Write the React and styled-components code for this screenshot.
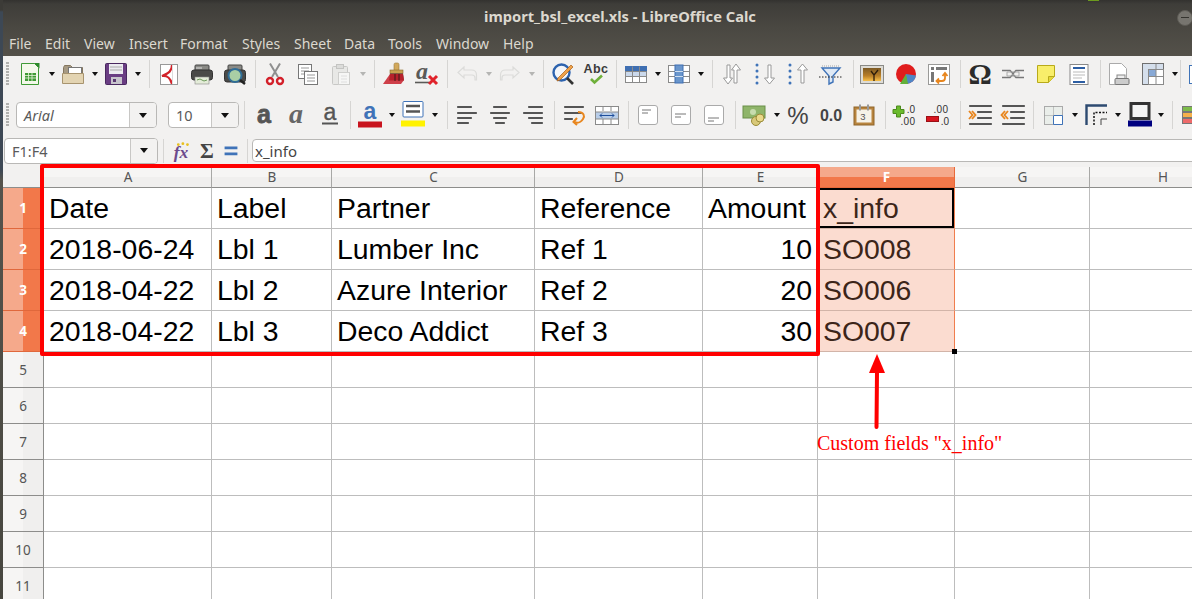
import React from 'react';
import styled, { createGlobalStyle } from 'styled-components';

const UI_FONT = '"Noto Sans", "Open Sans", sans-serif';

const GlobalStyle = createGlobalStyle`
html, body { margin: 0; padding: 0; background: #f2f1f0; }
* { box-sizing: border-box; }
`

const bar = (x, y, w, h = 2, fill = '#555') => <rect x={x} y={y} width={w} height={h} rx="0.8" fill={fill} />;
const tableLines = (stroke = '#8a8a8a') => (
    <path d="M1.5 9.5h21M1.5 14.5h21M8.5 4.5v16M15.5 4.5v16" stroke={stroke} fill="none" />
);

const icons = {
    new: <>
        <path d="M3.5 1.5h13l4 4v17h-17z" fill="#f3f8ea" stroke="#3f9a35" />
        <path d="M16 1h5.5v5.5z" fill="#2c8a2a" />
        <rect x="7" y="11" width="11" height="8" fill="#3f9a35" />
        <path d="M7 13.5h11M7 16h11M10.5 11v8M14 11v8" stroke="#e6f3d8" strokeWidth="0.8" />
    </>,
    open: <>
        <path d="M2.5 5.5l1-2h6l2 2h10v7h-19z" fill="#a79a83" stroke="#85775f" />
        <rect x="7.5" y="5.5" width="13" height="7" fill="#fff" stroke="#777" />
        <path d="M1.5 11.5h21v10h-21z" fill="#e3d4b2" stroke="#a8946f" />
    </>,
    save: <>
        <rect x="1.5" y="1.5" width="21" height="21" rx="1" fill="#6a3d83" stroke="#49285f" />
        <rect x="5" y="2" width="14" height="10" fill="#ecebf0" />
        <path d="M6 5h12M6 8h12" stroke="#aaa" />
        <rect x="7" y="15" width="11" height="7" fill="#c7c4cc" />
        <rect x="9" y="17" width="3" height="3" fill="#5a3a72" />
    </>,
    pdf: <>
        <rect x="3.5" y="2.5" width="17" height="20" fill="#fff" stroke="#999" />
        <path d="M15 3c0 6-3 8-10 11 5-.5 8 1 10 8" stroke="#d2232a" strokeWidth="2.2" fill="none" />
        <path d="M15.5 3v19" stroke="#ddd" />
    </>,
    print: <>
        <rect x="5" y="3" width="14" height="7" rx="1" fill="#8a8a86" stroke="#444" />
        <rect x="1.5" y="8" width="21" height="10" rx="2.5" fill="#4a4a48" stroke="#333" />
        <rect x="5" y="15" width="14" height="7" fill="#e4ecd9" stroke="#888" strokeWidth="0.6" />
        <path d="M7 18l3-1 4 2 3-1" stroke="#6d9a5a" fill="none" />
        <path d="M6 6h6" stroke="#ddd" />
    </>,
    preview: <>
        <rect x="5" y="3" width="14" height="7" rx="1" fill="#8a8a86" stroke="#444" />
        <rect x="1.5" y="8" width="21" height="12" rx="2.5" fill="#4a4a48" stroke="#333" />
        <circle cx="12" cy="13.5" r="6.5" fill="#a9cfa5" stroke="#2f6c96" strokeWidth="2" />
        <path d="M17 18l5 4" stroke="#222" strokeWidth="2.5" />
    </>,
    cut: <>
        <path d="M9 15L17 1.5M15 15L7 1.5" stroke="#8f8f8f" strokeWidth="2" fill="none" />
        <circle cx="7" cy="19" r="3" fill="#fff" stroke="#d3202a" strokeWidth="2.4" />
        <circle cx="17" cy="19" r="3" fill="#fff" stroke="#d3202a" strokeWidth="2.4" />
    </>,
    copy: <>
        <rect x="2.5" y="2.5" width="13" height="14" fill="#fff" stroke="#777" />
        <path d="M5 6h8M5 9h8M5 12h8" stroke="#999" />
        <rect x="8.5" y="9.5" width="13" height="13" fill="#fff" stroke="#777" />
        <path d="M11 13h8M11 16h8M11 19h8" stroke="#999" />
    </>,
    paste: <>
        <rect x="3.5" y="4.5" width="15" height="18" rx="1" fill="#e8e8e6" stroke="#c8c8c6" />
        <rect x="7.5" y="2.5" width="7" height="4" fill="#dcdcda" stroke="#c4c4c2" />
        <rect x="9.5" y="10.5" width="11" height="12" fill="#f6f6f5" stroke="#cfcfcd" />
        <path d="M12 14h6M12 17h6M12 20h6" stroke="#dedede" />
    </>,
    brush: <>
        <rect x="12" y="1" width="5" height="8" rx="1.5" fill="#d2a95c" stroke="#9c7a3a" strokeWidth="0.6" />
        <rect x="8" y="8" width="13" height="3.5" fill="#c9a14f" stroke="#8a6a2c" strokeWidth="0.6" />
        <path d="M8 11.5h13l1 7H7z" fill="#5b2a2a" />
        <path d="M8 12L1 22h18l3-4-1-6z" fill="#c8202c" opacity="0.85" />
        <path d="M13 12v7M17 12v7" stroke="#3a1a1a" />
    </>,
    clear: <>
        <text x="1" y="17" fontFamily="Liberation Serif" fontStyle="italic" fontWeight="700" fontSize="24" fill="#5a5a58">a</text>
        <path d="M0 20.5h14" stroke="#5a5a58" strokeWidth="1.6" />
        <path d="M14 14l8 8M22 14l-8 8" stroke="#e0222a" strokeWidth="3" />
    </>,
    undo: <path d="M9 5L3 10.5 9 16v-3h8c2 0 3 1 3 3v2h1.5v-5c0-3-2-5-5-5H9z" fill="#f2f1f0" stroke="#dcdcda" strokeWidth="1.2" />,
    redo: <path d="M15 5l6 5.5L15 16v-3H7c-2 0-3 1-3 3v2H2.500v-5c0-3 2-5 5-5H15z" fill="#f2f1f0" stroke="#dcdcda" strokeWidth="1.2" />,
    find: <>
        <circle cx="10.500" cy="10.500" r="8" fill="#f4f6fa" stroke="#2d63ae" strokeWidth="2.4" />
        <path d="M16 16l6 6" stroke="#333" strokeWidth="2.6" />
        <path d="M7 16L20 3l2 2L9 18l-3 1z" fill="#f0a24a" stroke="#a85f17" strokeWidth="0.7" />
    </>,
    spell: <>
        <text x="12" y="11" textAnchor="middle" fontFamily="Liberation Sans" fontWeight="700" fontSize="12.5" letterSpacing="0.4" fill="#3c3c3c">Abc</text>
        <path d="M7 17l3.500 3.500L18 13.500" stroke="#6fb03a" strokeWidth="2.6" fill="none" />
    </>,
    rows: <>
        <rect x="1.500" y="4.500" width="21" height="16" fill="#fff" stroke="#8a8a8a" />
        <rect x="1" y="4" width="22" height="5.500" fill="#3f6fb2" />
        <rect x="2" y="10" width="20" height="4" fill="#cbd9ec" />
        {tableLines()}
    </>,
    cols: <>
        <rect x="1.500" y="3.500" width="21" height="17" fill="#fff" stroke="#8a8a8a" />
        <path d="M1.500 9.500h21M1.500 14.500h21M8.500 3.500v17M15.500 3.500v17" stroke="#8a8a8a" />
        <rect x="8" y="3" width="8" height="18" fill="#6a96cc" stroke="#3f6fb2" />
        <path d="M8 9.500h8M8 14.500h8" stroke="#cfdff2" />
    </>,
    sort: <>
        <path d="M7 3v13H3.500L8 22l4.500-6H10V3z" fill="#fff" stroke="#999" />
        <path d="M17 21V8h3.500L16 2l-4.500 6H14v13z" fill="#fff" stroke="#999" />
    </>,
    asc: <>
        <path d="M4 3v0M4 9v0M4 15v0M4 21v0" stroke="#3f73b8" strokeWidth="3" strokeLinecap="round" />
        <path d="M15 3v13h-3.500L16.500 22l5-6H18V3z" fill="#fff" stroke="#999" />
    </>,
    desc: <>
        <path d="M4 3v0M4 9v0M4 15v0M4 21v0" stroke="#3f73b8" strokeWidth="3" strokeLinecap="round" />
        <path d="M15 21V8h-3.500L16.500 2l5 6H18v13z" fill="#fff" stroke="#999" />
    </>,
    filter: <>
        <path d="M3 6h18l-7 8v6l-4 2v-8z" fill="#dfe9f5" stroke="#3f73b8" strokeWidth="1.4" />
        <path d="M3 4h18" stroke="#ccc" strokeWidth="2" strokeDasharray="1 1" />
        <path d="M0 15h24" stroke="#222" strokeDasharray="1.500 1.500" />
    </>,
    image: <>
        <defs>
            <linearGradient id="dusk" x1="0" y1="0" x2="0" y2="1">
                <stop offset="0" stopColor="#7d5a24" />
                <stop offset="0.6" stopColor="#b97f28" />
                <stop offset="1" stopColor="#f8c04a" />
            </linearGradient>
        </defs>
        <rect x="-0.500" y="3.500" width="23" height="18" fill="#dedcd6" stroke="#8a8a86" />
        <rect x="2" y="6" width="18" height="13" fill="url(#dusk)" />
        <path d="M13 19v-7M13 13l-3-4M13 13l4-5" stroke="#2e1d0b" strokeWidth="1.300" fill="none" />
    </>,
    chart: <>
        <circle cx="12" cy="12" r="10" fill="#e01d1d" />
        <path d="M12 12l10 1.500a10 10 0 0 1-9 8.500H8z" fill="#4f86c6" />
        <path d="M12 12l2 10H6z" fill="#63b03a" />
    </>,
    pivot: <>
        <rect x="1.500" y="2.500" width="21" height="20" fill="#fff" stroke="#9a9a98" />
        <rect x="4" y="5" width="3" height="3" fill="#777" />
        <rect x="9" y="5" width="11" height="3" fill="#777" />
        <rect x="4" y="10" width="3" height="10" fill="#777" />
        <path d="M10 19h5c2 0 3-1 3-3v-4M15.500 14l2.500-3 2.500 3M12 16.500L9.500 19l2.500 2.500" stroke="#e8861e" strokeWidth="1.800" fill="none" />
    </>,
    omega: <text x="12" y="22" textAnchor="middle" fontFamily="Liberation Serif" fontWeight="700" fontSize="29" fill="#2b2b2b">Ω</text>,
    link: <>
        <path d="M1 8.500h8l3 3 3-3h8M1 15.500h8l3-3 3 3h8" stroke="#777" strokeWidth="1.600" fill="none" />
        <path d="M6 10h12v4H6z" fill="none" stroke="#aaa" />
    </>,
    note: <>
        <path d="M3.500 3.500h17v11l-6 6h-11z" fill="#f8ee6a" stroke="#b8aa1a" />
        <path d="M14.500 20.500v-6h6" fill="#e4d73a" stroke="#b8aa1a" />
    </>,
    header: <>
        <rect x="3" y="2.500" width="18" height="20" fill="#fff" stroke="#888" />
        <path d="M6 6h12" stroke="#2d5ea3" strokeWidth="2" />
        <path d="M6 10h12M6 13h12M6 16h9" stroke="#bbb" />
        <path d="M6 20h12" stroke="#2d5ea3" strokeWidth="2" />
    </>,
    page: <>
        <path d="M1.500 1.500h12l5 5v16h-17z" fill="#fff" stroke="#aaa" />
        <rect x="9" y="13" width="8" height="4" fill="#eee" stroke="#888" />
        <rect x="7" y="16.500" width="14" height="6" rx="1" fill="#ccc" stroke="#777" />
    </>,
    freeze: <>
        <rect x="1.500" y="1.500" width="21" height="21" fill="#d5dfec" stroke="#707070" />
        <rect x="7.500" y="7.500" width="15" height="15" fill="#fff" stroke="#8a8a8a" />
        <rect x="8" y="8" width="7" height="6" fill="#88a9d6" />
        <path d="M15 2v20M8 14.500h15" stroke="#8a8a8a" />
    </>,
    next: <>
        <rect x="1.500" y="3.500" width="21" height="18" fill="#fff" stroke="#3f73b8" />
        <path d="M8 4v17" stroke="#e8861e" />
    </>,
    bold: <text x="12" y="20" textAnchor="middle" fontFamily="Liberation Sans" fontWeight="700" fontSize="25" fill="#555" stroke="#555" strokeWidth="0.8">a</text>,
    italic: <text x="11" y="20" textAnchor="middle" fontFamily="Liberation Serif" fontStyle="italic" fontWeight="700" fontSize="28" fill="#666">a</text>,
    under: <>
        <text x="12" y="17" textAnchor="middle" fontFamily="Liberation Sans" fontSize="23" fill="#555" stroke="#555" strokeWidth="0.4">a</text>
        <path d="M4 20.500h16" stroke="#555" strokeWidth="2" />
    </>,
    fontcolor: <>
        <text x="12" y="16" textAnchor="middle" fontFamily="Liberation Sans" fontWeight="700" fontSize="23" fill="#3f73b8">a</text>
        <rect x="0" y="18.500" width="24" height="6" fill="#c8141e" />
    </>,
    hilite: <>
        <rect x="2" y="-1.500" width="20" height="15.500" rx="1" fill="#fff" stroke="#3f73b8" />
        <path d="M5 3h14M5 8.500h14" stroke="#555" strokeWidth="2.400" />
        <rect x="0" y="17.500" width="24" height="6" fill="#fff200" />
    </>,
    left: <>{bar(2, 3, 15)}{bar(2, 9, 20)}{bar(2, 14, 15)}{bar(2, 19, 12)}</>,
    center: <>{bar(5, 3, 14)}{bar(2, 9, 20)}{bar(5, 14, 14)}{bar(7, 19, 10)}</>,
    right: <>{bar(7, 3, 15)}{bar(2, 9, 20)}{bar(7, 14, 15)}{bar(10, 19, 12)}</>,
    wrap: <>
        {bar(2, 3, 20)}{bar(2, 9, 18)}{bar(2, 15, 9)}
        <path d="M16 9c6 0 7 4 5 7s-4 5-9 3" stroke="#e8861e" strokeWidth="2" fill="none" />
        <path d="M15 15l-3.500 4 3.500 3" stroke="#e8861e" strokeWidth="2" fill="none" />
    </>,
    merge: <>
        <rect x="0.500" y="3.500" width="23" height="18" fill="#fff" stroke="#8a8a8a" />
        <rect x="1" y="9" width="22" height="7" fill="#b8cde8" />
        <path d="M1 9h22M1 16h22M8 3v5M16 3v5M8 16v5M16 16v5" stroke="#8a8a8a" />
        <path d="M5 12.500h14M7 10.500l-2 2 2 2M17 10.500l2 2-2 2" stroke="#1e4e9c" fill="none" />
    </>,
    top: <>
        <rect x="2.500" y="2.500" width="19" height="19" rx="2.500" fill="#fff" stroke="#aaa" />
        <path d="M6 7h9M6 10h6" stroke="#777" />
    </>,
    mid: <>
        <rect x="2.500" y="2.500" width="19" height="19" rx="2.500" fill="#fff" stroke="#aaa" />
        <path d="M6 11h11M6 14h6" stroke="#777" />
    </>,
    bottom: <>
        <rect x="2.500" y="2.500" width="19" height="19" rx="2.500" fill="#fff" stroke="#aaa" />
        <path d="M6 15h11M6 18h6" stroke="#777" />
    </>,
    money: <>
        <rect x="0" y="3" width="22" height="12" fill="#8fb56a" stroke="#6a8f48" />
        <circle cx="10" cy="9" r="3" fill="#c7dcae" />
        <circle cx="13" cy="18" r="4.500" fill="#d8c878" stroke="#9a8c3a" />
        <circle cx="17" cy="15" r="4" fill="#ead98a" stroke="#9a8c3a" />
    </>,
    percent: <text x="12" y="21" textAnchor="middle" fontFamily="Liberation Sans" fontSize="24" fill="#444">%</text>,
    decimal: <text x="12" y="18" textAnchor="middle" fontFamily="Liberation Sans" fontWeight="700" fontSize="16" fill="#444">0.0</text>,
    date: <>
        <rect x="2" y="4" width="20" height="18" fill="#b8843e" stroke="#8f6528" />
        <rect x="4.500" y="6.500" width="15" height="13" fill="#f6f2e8" />
        <path d="M8 1.500v6M16 1.500v6" stroke="#999" strokeWidth="2" />
        <text x="11" y="17" textAnchor="middle" fontFamily="Liberation Sans" fontSize="9.500" fill="#555">3</text>
    </>,
    adddec: <>
        <path d="M3.500 3h4v3.500H11v4H7.500V14h-4v-3.500H0v-4h3.500z" fill="#6bbb2d" stroke="#4c8a1c" />
        <text x="18" y="10" textAnchor="middle" fontFamily="Liberation Sans" fontSize="10" fill="#333">.0</text>
        <text x="15" y="22" textAnchor="middle" fontFamily="Liberation Sans" fontSize="10" letterSpacing="0.4" fill="#333">.00</text>
    </>,
    remdec: <>
        <text x="15" y="10" textAnchor="middle" fontFamily="Liberation Sans" fontSize="10" letterSpacing="0.4" fill="#333">.00</text>
        <rect x="0.500" y="13.500" width="12" height="5" fill="#d8141e" stroke="#9a1016" />
        <text x="19" y="22" textAnchor="middle" fontFamily="Liberation Sans" fontSize="10" fill="#333">.0</text>
    </>,
    indent: <>
        {bar(1, 2, 23)}{bar(9, 8, 15)}{bar(9, 14, 15)}{bar(1, 20, 23)}
        <path d="M1 8l3.500 4L1 16M4 8l3.500 4L4 16" stroke="#e8861e" strokeWidth="1.800" fill="none" />
    </>,
    outdent: <>
        {bar(1, 2, 23)}{bar(9, 8, 15)}{bar(9, 14, 15)}{bar(1, 20, 23)}
        <path d="M7 8l-3.500 4L7 16M4 8L.500 12 4 16" stroke="#e8861e" strokeWidth="1.800" fill="none" />
    </>,
    borders: <>
        <rect x="2.500" y="3.500" width="18" height="18" fill="#eaeeea" stroke="#aaa" />
        <rect x="11.500" y="12.500" width="9" height="9" fill="#fff" />
        <path d="M11.500 21.500v-9h9M20.500 12.500v9h-9" stroke="#3f73b8" fill="none" />
        <path d="M2.500 12.500h9M11.500 3.500v9" stroke="#999" strokeDasharray="1 1" />
    </>,
    bstyle: <>
        <path d="M1.500 22V2.500H22" stroke="#2d4a70" strokeWidth="2.400" fill="none" />
        <path d="M9 22V9.500h13" stroke="#111" strokeWidth="1.500" strokeDasharray="2 1.500" fill="none" />
        <path d="M16 22v-6h6" stroke="#444" fill="none" />
    </>,
    bcolor: <>
        <rect x="3" y="0.500" width="18" height="15" fill="#f4f4f4" stroke="#333" strokeWidth="3" />
        <rect x="0" y="17.500" width="24" height="6" fill="#000080" />
    </>,
    cond: <>
        <rect x="1.500" y="3.500" width="21" height="5" fill="#7dbb4a" stroke="#777" />
        <rect x="1.500" y="9.500" width="21" height="5" fill="#f5b04a" stroke="#777" />
        <rect x="1.500" y="15.500" width="21" height="5" fill="#ee6a6a" stroke="#777" />
    </>,
};

// number = separator width, * = has a dropdown, ~ = disabled dropdown
const standardBar = ['new*', 'open*', 'save*', 10, 'pdf', 'print', 'preview', 7, 'cut', 'copy', 'paste~', 10, 'brush', 'clear', 7,
    'undo~', 'redo~', 10, 'find', 'spell', 7, 'rows*', 'cols*', 10, 'sort', 'asc', 'desc', 'filter', 9, 'image', 'chart', 'pivot', 8,
    'omega', 'link', 'note', 'header', 8, 'page', 'freeze*', 4, 'next'];
const formatBar = [8.5, 'bold', 'italic', 'under', 7, 'fontcolor*', 'hilite*', 11, 'left', 'center', 'right', 8, 'wrap', 'merge', 8,
    'top', 'mid', 'bottom', 8, 'money*', 'percent', 'decimal', 'date', 8, 'adddec', 'remdec', 9, 'indent', 'outdent', 7.5,
    'borders*', 'bstyle*', 'bcolor*', 10, 'cond'];

const menus = [['File', 36], ['Edit', 39], ['View', 45], ['Insert', 51], ['Format', 62], ['Styles', 52], ['Sheet', 50], ['Data', 44], ['Tools', 48], ['Window', 67], ['Help', 50]];

const columns = ['A', 'B', 'C', 'D', 'E', 'F', 'G', 'H'];
const dataRows = [
    ['Date', 'Label', 'Partner', 'Reference', 'Amount', 'x_info'],
    ['2018-06-24', 'Lbl 1', 'Lumber Inc', 'Ref 1', '10', 'SO008'],
    ['2018-04-22', 'Lbl 2', 'Azure Interior', 'Ref 2', '20', 'SO006'],
    ['2018-04-22', 'Lbl 3', 'Deco Addict', 'Ref 3', '30', 'SO007'],
];
const emptyRows = [5, 6, 7, 8, 9, 10, 11];

function ToolItems({ items }) {
    return items.map((item, id) => {
        if (typeof item === 'number') return <Sep key={id} $w={item} />;
        const name = item.replace(/[*~]/, '');
        return (
            <React.Fragment key={id}>
                <Tool><Icon viewBox="0 0 24 24">{icons[name]}</Icon></Tool>
                {/[*~]/.test(item) && <Caret $off={item.endsWith('~')} />}
            </React.Fragment>
        );
    });
}

export default function App() {
    return (
        <Shell>
            <GlobalStyle />
            <Edge />
            <Window>
                <TitleBar>
                    <TitleText>import_bsl_excel.xls - LibreOffice Calc</TitleText>
                    <GreenSpot />
                    <MinButton />
                </TitleBar>
                <MenuBar>
                    {menus.map(([label, w]) => <MenuItem key={label} $w={w}>{label}</MenuItem>)}
                </MenuBar>
                <Toolbar $h={40}>
                    <Grip />
                    <ToolItems items={standardBar} />
                </Toolbar>
                <Toolbar $h={39}>
                    <Grip />
                    <Combo $w={141} $left={2.5} $italic>
                        <ComboText>Arial</ComboText>
                        <ComboButton />
                    </Combo>
                    <Combo $w={71} $left={11}>
                        <ComboText>10</ComboText>
                        <ComboButton />
                    </Combo>
                    <ToolItems items={formatBar} />
                </Toolbar>
                <FormulaBar>
                    <NameBox>
                        <ComboText>F1:F4</ComboText>
                        <ComboButton />
                    </NameBox>
                    <FormulaSep />
                    <FormulaIcons>
                        <FormulaIcon viewBox="0 0 24 24">
                            <text x="12" y="20" textAnchor="middle" fontFamily="Liberation Serif" fontStyle="italic" fontWeight="700" fontSize="19" fill="#6d4a8c">fx</text>
                            <path d="M9 5h.1M14 4h.1M19 5h.1" stroke="#e8c020" strokeWidth="3" strokeLinecap="round" />
                        </FormulaIcon>
                        <FormulaIcon viewBox="0 0 24 24">
                            <text x="12" y="20" textAnchor="middle" fontFamily="Liberation Serif" fontWeight="700" fontSize="23" fill="#444">Σ</text>
                        </FormulaIcon>
                        <FormulaIcon viewBox="0 0 24 24" $narrow>
                            <path d="M5 8.500h14M5 15h14" stroke="#3f73b8" strokeWidth="3" />
                        </FormulaIcon>
                    </FormulaIcons>
                    <FormulaSep />
                    <FormulaInput>x_info</FormulaInput>
                </FormulaBar>
                <Sheet>
                    <Row $h={21}>
                        <Corner />
                        {columns.map((c) => <ColHead key={c} $on={c === 'F'}>{c}</ColHead>)}
                    </Row>
                    {dataRows.map((cells, r) => (
                        <Row key={r} $h={41}>
                            <RowHead $on>{r + 1}</RowHead>
                            {cells.map((text, c) => (
                                <Cell key={c} $right={r > 0 && c === 4} $on={c === 5} $cursor={c === 5 && r === 0}>
                                    {text}
                                    {c === 5 && r === 3 && <FillHandle />}
                                </Cell>
                            ))}
                            <Cell />
                            <Cell />
                        </Row>
                    ))}
                    {emptyRows.map((n) => (
                        <Row key={n} $h={36}>
                            <RowHead>{n}</RowHead>
                            {columns.map((c) => <Cell key={c} />)}
                        </Row>
                    ))}
                    <RedBox />
                    <Arrow viewBox="0 0 16 75">
                        <path d="M8 0L16 19H0z" fill="#ff0000" />
                        <path d="M8 18L7.500 73" stroke="#ff0000" strokeWidth="4" strokeLinecap="round" />
                    </Arrow>
                    <Note>Custom fields "x_info"</Note>
                </Sheet>
            </Window>
        </Shell>
    )
}

const Shell = styled.div`
display: flex;
width: 1192px;
height: 599px;
overflow: hidden;
`
const Edge = styled.div`
width: 3px;
flex: none;
background: linear-gradient(#3c3b37 0, #3c3b37 10px, #3d4855 12px, #3d4855 170px, #55534c 180px, #47463f 599px);
`
const Window = styled.div`
flex: 1;
min-width: 0;
display: flex;
flex-direction: column;
background: #f2f1f0;
`
const TitleBar = styled.div`
position: relative;
height: 28px;
flex: none;
display: flex;
align-items: center;
padding: 4px 0 0 481px;
background: linear-gradient(#33322f 0, #3e3d39 4px, #4a4842 28px);
`
const TitleText = styled.div`
font-family: ${UI_FONT};
font-weight: 700;
font-size: 14.700px;
white-space: nowrap;
color: #dcd8cf;
`
const GreenSpot = styled.div`
position: absolute;
left: 1085px;
top: 0;
width: 11px;
height: 1px;
background: #6c9a1e;
`
const MinButton = styled.div`
position: absolute;
right: -1px;
top: 10px;
width: 16px;
height: 16px;
border-radius: 50%;
background: #77756f;
border: 1px solid #5d5b55;
&::after {
    content: '';
    position: absolute;
    left: 3px;
    right: 3px;
    top: 6px;
    height: 1px;
    background: #35342f;
}
`
const MenuBar = styled.div`
height: 28px;
flex: none;
display: flex;
align-items: center;
padding: 3px 0 0 6px;
background: linear-gradient(#4a4842, #54514a);
`
const MenuItem = styled.div`
width: ${(p) => p.$w}px;
flex: none;
font-family: ${UI_FONT};
font-size: 14px;
color: #dcd8cf;
`
const Toolbar = styled.div`
height: ${(p) => p.$h}px;
flex: none;
display: flex;
align-items: center;
padding: 0 0 ${(p) => (p.$h === 40 ? 4 : 1)}px 3px;
overflow: hidden;
`
const Grip = styled.div`
width: 3px;
height: 24px;
flex: none;
margin-right: 4.500px;
background: repeating-linear-gradient(#b0b0ae 0, #b0b0ae 2px, transparent 2px, transparent 3px);
`
const Tool = styled.div`
width: 33px;
flex: none;
display: flex;
justify-content: center;
`
const Icon = styled.svg`
width: 24px;
height: 24px;
overflow: visible;
`
const Caret = styled.div`
width: 10px;
flex: none;
display: flex;
justify-content: center;
&::after {
    content: '';
    border-left: 3.500px solid transparent;
    border-right: 3.500px solid transparent;
    border-top: 4px solid ${(p) => (p.$off ? '#b5b5b3' : '#111')};
}
`
const Sep = styled.div`
width: ${(p) => p.$w}px;
flex: none;
height: 28px;
padding-right: 3px;
display: flex;
justify-content: flex-end;
&::after {
    content: '';
    width: 1px;
    background: #d6d5d3;
}
`
const Combo = styled.div`
width: ${(p) => p.$w}px;
height: 26px;
flex: none;
margin-left: ${(p) => p.$left}px;
display: flex;
align-items: stretch;
background: #fff;
border: 1px solid #b9b8b6;
border-radius: 4px;
font-style: ${(p) => (p.$italic ? 'italic' : 'normal')};
overflow: hidden;
`
const ComboText = styled.div`
flex: 1;
padding-left: 7px;
display: flex;
align-items: center;
font-family: ${UI_FONT};
font-size: 14.500px;
color: #5a5a5a;
`
const ComboButton = styled.div`
width: 27px;
flex: none;
display: flex;
align-items: center;
justify-content: center;
background: #f3f2f1;
border-left: 1px solid #c8c7c5;
&::after {
    content: '';
    border-left: 4.500px solid transparent;
    border-right: 4.500px solid transparent;
    border-top: 5px solid #111;
}
`
const FormulaBar = styled.div`
height: 32px;
flex: none;
display: flex;
align-items: center;
padding-bottom: 1px;
`
const NameBox = styled(Combo)`
width: 154px;
margin-left: 1px;
`
const FormulaSep = styled.div`
width: 1px;
height: 24px;
flex: none;
margin: 0 4px 0 5px;
background: #d6d5d3;
`
const FormulaIcons = styled.div`
display: flex;
width: 74px;
flex: none;
`
const FormulaIcon = styled.svg`
width: 26px;
height: 22px;
flex: none;
margin-left: ${(p) => (p.$narrow ? -2 : 0)}px;
`
const FormulaInput = styled.div`
flex: 1;
height: 23px;
display: flex;
align-items: center;
padding-left: 2px;
margin-right: -6px;
background: #fff;
border: 1px solid #b9b8b6;
border-radius: 4px 0 0 4px;
font-family: ${UI_FONT};
font-size: 15px;
color: #444;
`
const Sheet = styled.div`
position: relative;
flex: 1;
min-height: 0;
background: #fff;
`
const Row = styled.div`
display: grid;
grid-template-columns: 41px 168px 120px 203px 168px 115px 137px 135px 146px;
height: ${(p) => p.$h}px;
`
const Corner = styled.div`
background: #f2f1f0;
border-right: 1px solid #8d8d8b;
border-bottom: 1px solid #8d8d8b;
`
const ColHead = styled.div`
display: flex;
align-items: center;
justify-content: center;
padding-left: 1px;
font-family: ${UI_FONT};
font-size: 13.500px;
font-weight: ${(p) => (p.$on ? 700 : 400)};
color: ${(p) => (p.$on ? '#fff' : '#555')};
background: ${(p) => (p.$on
        ? 'linear-gradient(#f5a98b 0, #f5a98b 50%, #f2784a 50%, #f2784a 100%)'
        : 'linear-gradient(#f6f5f4 0, #f6f5f4 50%, #f0efee 50%, #f0efee 100%)')};
border-right: 1px solid ${(p) => (p.$on ? '#e8693a' : '#a8a8a6')};
border-bottom: 1px solid ${(p) => (p.$on ? '#e8693a' : '#8d8d8b')};
`
const RowHead = styled.div`
display: flex;
align-items: center;
justify-content: center;
font-family: ${UI_FONT};
font-size: 13.500px;
font-weight: ${(p) => (p.$on ? 700 : 400)};
color: ${(p) => (p.$on ? '#fff' : '#555')};
background: ${(p) => (p.$on
        ? 'linear-gradient(90deg, #f5a98b 0, #f5a98b 50%, #f2784a 50%, #f2784a 100%)'
        : 'linear-gradient(90deg, #f6f5f4 0, #f6f5f4 50%, #f0efee 50%, #f0efee 100%)')};
border-right: 1px solid #8d8d8b;
border-bottom: 1px solid ${(p) => (p.$on ? '#e0683c' : '#8d8d8b')};
`
const Cell = styled.div`
position: relative;
display: flex;
align-items: center;
justify-content: ${(p) => (p.$right ? 'flex-end' : 'flex-start')};
padding: 0 5px;
font-family: "Liberation Sans", Arial, sans-serif;
font-size: 28.400px;
white-space: nowrap;
color: ${(p) => (p.$on ? '#3c2519' : '#000')};
background: ${(p) => (p.$on ? '#fbdcd0' : '#fff')};
border-right: 1px solid ${(p) => (p.$on ? '#f07d4e' : '#bdbdbd')};
border-bottom: 1px solid ${(p) => (p.$on ? '#d2b4a8' : '#bdbdbd')};
box-shadow: ${(p) => (p.$cursor ? 'inset 0 0 0 2px #000' : 'none')};
&:last-child { border-right: 0; }
`
const FillHandle = styled.div`
position: absolute;
right: -3px;
bottom: -3px;
width: 5px;
height: 5px;
background: #000;
z-index: 2;
`
const RedBox = styled.div`
position: absolute;
left: 37px;
top: -3px;
width: 780px;
height: 192px;
border: 4px solid #ff0000;
border-radius: 2px;
pointer-events: none;
`
const Arrow = styled.svg`
position: absolute;
left: 866px;
top: 187px;
width: 16px;
height: 75px;
overflow: visible;
`
const Note = styled.div`
position: absolute;
left: 814px;
top: 265px;
font-family: "Liberation Serif", "Times New Roman", serif;
font-size: 20px;
white-space: nowrap;
color: #ff0000;
`
